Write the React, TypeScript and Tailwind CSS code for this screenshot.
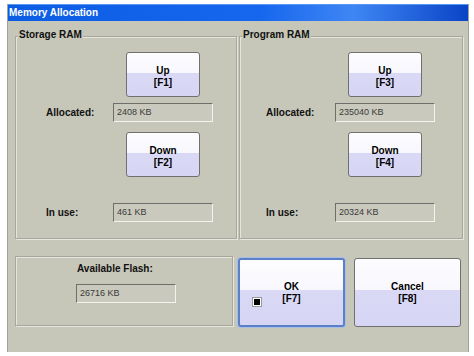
import React from "react";

const FONT = { fontFamily: '"Liberation Sans", Arial, sans-serif' };

function KeyButton({
  top,
  bottom,
  size,
  focused,
  pad,
}: {
  top: string;
  bottom: string;
  size: string;
  focused?: boolean;
  pad?: string;
}) {
  return (
    <button
      className={`relative flex flex-col items-center justify-center rounded-[3px] bg-[linear-gradient(to_bottom,#fdfdff_0%,#f7f7fd_46%,#d9d9f6_47%,#d6d6f4_100%)] text-[10px] font-bold leading-[12px] text-black ${size} ${pad ?? ""} ${
        focused
          ? "border-2 border-[#5a80c8] shadow-[0_0_0_1px_#a9bde6]"
          : "border border-[#707070]"
      }`}
    >
      <span>{top}</span>
      <span>{bottom}</span>
      {focused ? (
        <span className="absolute left-[12px] top-[37px] flex h-[10px] w-[10px] items-center justify-center border border-[#9a9a9a] bg-white">
          <span className="h-[6px] w-[6px] bg-black" />
        </span>
      ) : null}
    </button>
  );
}

function ValueBox({ value }: { value: string }) {
  return (
    <div className="flex h-[19px] w-[100px] items-center border-b border-l border-r border-t border-b-[#f4f4ee] border-l-[#6f6f6a] border-r-[#f4f4ee] border-t-[#6f6f6a] bg-[#c9c9bd] pl-[3px] text-[9px] text-[#3a3a3a]">
      {value}
    </div>
  );
}

function GroupBox({
  title,
  width,
  pl,
  labelW,
  up,
  down,
  alloc,
  inUse,
}: {
  title: string;
  width: string;
  pl: string;
  labelW: string;
  up: string;
  down: string;
  alloc: string;
  inUse: string;
}) {
  return (
    <div
      className={`${width} h-[203px] border border-[#a7a79b] shadow-[inset_1px_1px_0_#e6e6de,1px_1px_0_#e6e6de]`}
    >
      <span className="-mt-[8px] ml-[2px] block w-fit bg-[#c6c6b9] px-[1px] text-[10px] font-bold leading-[12px] text-[#111]">
        {title}
      </span>
      <div className={`flex flex-col ${pl}`}>
        <div className="mt-[11px] flex">
          <div className={`${labelW} shrink-0`} />
          <div className="flex w-[100px] justify-center">
            <KeyButton top="Up" bottom={up} size="h-[45px] w-[74px]" pad="pt-[4px]" />
          </div>
        </div>
        <div className="mt-[6px] flex h-[19px] items-center">
          <span className={`${labelW} shrink-0 text-[10px] font-bold text-[#111]`}>Allocated:</span>
          <ValueBox value={alloc} />
        </div>
        <div className="mt-[10px] flex">
          <div className={`${labelW} shrink-0`} />
          <div className="flex w-[100px] justify-center">
            <KeyButton top="Down" bottom={down} size="h-[45px] w-[74px]" pad="pt-[4px]" />
          </div>
        </div>
        <div className="mt-[26px] flex h-[19px] items-center">
          <span className={`${labelW} shrink-0 text-[10px] font-bold text-[#111]`}>In use:</span>
          <ValueBox value={inUse} />
        </div>
      </div>
    </div>
  );
}

export default function App() {
  return (
    <div className="h-[356px] w-[474px] bg-white pl-[7px] pt-[4px]" style={FONT}>
      <div className="flex h-[348px] w-[462px] flex-col border-l border-r border-[#a2a296] bg-[#c6c6b9]">
        <div className="flex h-[17px] items-center bg-[linear-gradient(to_right,#0b5de4_0%,#1767ee_55%,#3f86f4_75%,#0a44c6_100%)] pl-[1px] text-[10px] font-bold text-white shadow-[inset_0_1px_0_#5a96f4]">
          Memory Allocation
        </div>
        <div className="flex flex-col pl-[7px]">
          <div className="mt-[15px] flex gap-[2px]">
            <GroupBox
              title="Storage RAM"
              width="w-[222px]"
              pl="pl-[30px]"
              labelW="w-[67px]"
              up="[F1]"
              down="[F2]"
              alloc="2408 KB"
              inUse="461 KB"
            />
            <GroupBox
              title="Program RAM"
              width="w-[224px]"
              pl="pl-[26px]"
              labelW="w-[69px]"
              up="[F3]"
              down="[F4]"
              alloc="235040 KB"
              inUse="20324 KB"
            />
          </div>
          <div className="mt-[17px] flex items-start">
            <div className="h-[70px] w-[218px] border border-[#a7a79b] pl-[60px] pt-[6px] shadow-[inset_1px_1px_0_#e6e6de,1px_1px_0_#e6e6de]">
              <div className="ml-[1px] text-[10px] font-bold leading-[12px] text-[#111]">
                Available Flash:
              </div>
              <div className="mt-[9px]">
                <ValueBox value="26716 KB" />
              </div>
            </div>
            <div className="ml-[5px] mt-[2px] flex gap-[9px]">
              <KeyButton top="OK" bottom="[F7]" size="h-[69px] w-[107px]" focused />
              <KeyButton top="Cancel" bottom="[F8]" size="h-[69px] w-[107px]" />
            </div>
          </div>
        </div>
      </div>
    </div>
  );
}
